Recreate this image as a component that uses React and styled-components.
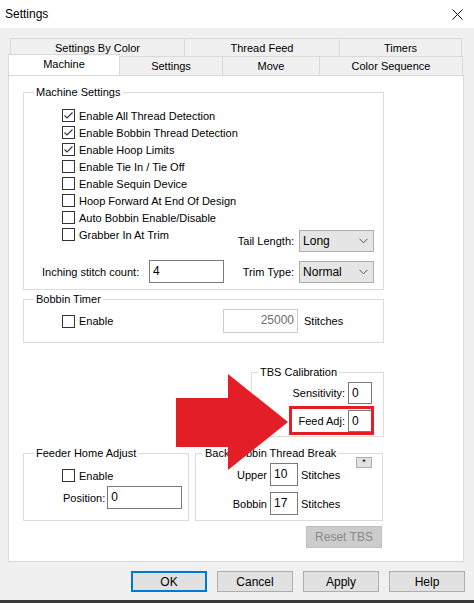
import React from "react";
import styled, { createGlobalStyle } from "styled-components";

const GlobalStyle = createGlobalStyle`
  html, body {
    margin: 0;
    padding: 0;
    background: #f0f0f0;
  }
  body {
    font-family: "Liberation Sans", Arial, sans-serif;
    font-size: 11px;
    color: #000;
  }
`;

const Window = styled.div`
  width: 474px;
  height: 603px;
  display: flex;
  flex-direction: column;
  background: #f0f0f0;
  overflow: hidden;
`;

const TitleBar = styled.div`
  flex: none;
  height: 28px;
  box-sizing: border-box;
  padding: 0 11px 0 5px;
  background: #fff;
  display: flex;
  align-items: center;
  justify-content: space-between;
  font-size: 12px;
`;

const Tabs = styled.div`
  margin-top: 10px;
  display: flex;
  flex-direction: column;
`;

const TabRow = styled.div`
  display: flex;
  margin-left: ${(p) => p.$indent}px;
  height: ${(p) => p.$height}px;
`;

const Tab = styled.div`
  box-sizing: border-box;
  width: ${(p) => p.$width}px;
  height: ${(p) => (p.$active ? p.$h + 2 : p.$h)}px;
  margin-top: ${(p) => (p.$active ? -2 : 0)}px;
  border: 1px solid #d9d9d9;
  border-bottom: none;
  margin-right: -1px;
  background: ${(p) => (p.$active ? "#fff" : "#f0f0f0")};
  display: flex;
  align-items: center;
  justify-content: center;
  padding-bottom: ${(p) => (p.$active ? 3 : 0)}px;
  position: relative;
  z-index: ${(p) => (p.$active ? 2 : 1)};
`;

const Panel = styled.div`
  position: relative;
  margin-left: 8px;
  width: 456px;
  height: 487px;
  box-sizing: border-box;
  background: #fff;
  border: 1px solid #d9d9d9;
  padding: 9px 0 0 14px;
`;

const Column = styled.div`
  width: 361px;
  display: flex;
  flex-direction: column;
`;

const Group = styled.fieldset`
  margin: 0;
  padding: 0;
  min-width: 0;
  border: 1px solid #dcdcdc;
  box-sizing: border-box;
  position: relative;
  width: ${(p) => (p.$width ? `${p.$width}px` : "auto")};
  margin-top: ${(p) => p.$top || 0}px;
  align-self: ${(p) => p.$align || "stretch"};
`;

const Legend = styled.legend`
  padding: 0 2px;
  margin-left: ${(p) => p.$indent}px;
  line-height: 14px;
  font-size: 11px;
`;

const GroupBody = styled.div`
  padding: ${(p) => p.$pad};
`;

const MachineBody = styled(GroupBody)`
  display: flex;
  justify-content: space-between;
`;

const LeftCol = styled.div`
  display: flex;
  flex-direction: column;
  flex: none;
`;

const CheckList = styled.div`
  margin-left: 20px;
  display: flex;
  flex-direction: column;
`;

const CheckRow = styled.label`
  height: 17px;
  display: flex;
  align-items: center;
  gap: 4px;
  white-space: nowrap;
  width: ${(p) => (p.$width ? `${p.$width}px` : "auto")};
  flex: none;
`;

const Box = styled.span`
  width: 13px;
  height: 13px;
  box-sizing: border-box;
  border: 1px solid #333;
  background: #fff;
  display: flex;
  flex: none;
`;

const FieldRow = styled.div`
  height: ${(p) => p.$h || 23}px;
  margin-top: ${(p) => p.$top || 0}px;
  display: flex;
  align-items: center;
  gap: ${(p) => p.$gap || 3}px;
  justify-content: ${(p) => (p.$end ? "flex-end" : "flex-start")};
`;

const Text = styled.span`
  width: ${(p) => (p.$width ? `${p.$width}px` : "auto")};
  margin-left: ${(p) => p.$left || 0}px;
  text-align: ${(p) => (p.$right ? "right" : "left")};
  white-space: nowrap;
  flex: none;
`;

const Input = styled.div`
  box-sizing: border-box;
  width: ${(p) => p.$width}px;
  height: ${(p) => p.$h || 23}px;
  border: 1px solid ${(p) => (p.$disabled ? "#cccccc" : "#7a7a7a")};
  background: #fff;
  color: ${(p) => (p.$disabled ? "#6d6d6d" : "#000")};
  display: flex;
  align-items: flex-start;
  justify-content: ${(p) => (p.$right ? "flex-end" : "flex-start")};
  padding: 3px 3px 0 3px;
  font-size: 12px;
  flex: none;
`;

const RightCol = styled.div`
  display: flex;
  flex-direction: column;
  justify-content: flex-end;
  gap: 8px;
`;

const Select = styled.div`
  box-sizing: border-box;
  width: 75px;
  height: 22px;
  border: 1px solid #adadad;
  background: #e5e5e5;
  display: flex;
  align-items: center;
  justify-content: space-between;
  padding: 0 5px 0 3px;
  font-size: 12px;
`;

const TimerRow = styled.div`
  height: 24px;
  display: flex;
  align-items: center;
  padding-left: 38px;
`;

const BottomRow = styled.div`
  margin-top: 9px;
  display: flex;
  gap: 6px;
`;

const BreakGrid = styled.div`
  display: grid;
  grid-template-columns: 71px 28px 1fr 16px;
  grid-auto-rows: 23px;
  column-gap: 3px;
  row-gap: 6px;
  align-items: center;
`;

const StarButton = styled.div`
  align-self: start;
  margin-top: -6px;
  width: 16px;
  height: 11px;
  box-sizing: border-box;
  border: 1px solid #adadad;
  background: #e1e1e1;
  font-size: 9px;
  line-height: 8px;
  text-align: center;
`;

const Button = styled.div`
  box-sizing: border-box;
  width: 76px;
  height: ${(p) => p.$h || 21}px;
  display: flex;
  align-items: center;
  justify-content: center;
  font-size: 12px;
  border: ${(p) => (p.$default ? "2px solid #0078d7" : "1px solid #adadad")};
  background: ${(p) => (p.$disabled ? "#cccccc" : "#e1e1e1")};
  color: ${(p) => (p.$disabled ? "#8a8a8a" : "#000")};
`;

const ResetButton = styled(Button)`
  align-self: flex-end;
  margin: 5px 2px 0 0;
  border-color: #bfbfbf;
`;

const ButtonBar = styled.div`
  margin-top: 9px;
  padding-right: 9px;
  display: flex;
  justify-content: flex-end;
  gap: 10px;
`;

const Taskbar = styled.div`
  margin-top: auto;
  height: 3px;
  background: #3a3a3a;
`;

// red annotation drawn over the dialog
const Highlight = styled.div`
  position: absolute;
  left: 37px;
  top: 27px;
  width: 85px;
  height: 29px;
  box-sizing: border-box;
  border: 3px solid #e41e26;
  z-index: 3;
`;

const Arrow = styled.svg`
  position: absolute;
  left: 167px;
  top: 298px;
  z-index: 4;
`;

function CheckBox({ label, checked, width }) {
    return (
        <CheckRow $width={width}>
            <Box>
                {checked && (
                    <svg width="11" height="11" viewBox="0 0 11 11">
                        <polyline points="1.5,5.5 4,8 9.5,2.5" fill="none" stroke="#333" strokeWidth="1.1" />
                    </svg>
                )}
            </Box>
            {label}
        </CheckRow>
    );
}

function Chevron() {
    return (
        <svg width="9" height="6" viewBox="0 0 9 6">
            <polyline points="0.5,0.8 4.5,4.8 8.5,0.8" fill="none" stroke="#555" strokeWidth="1" />
        </svg>
    );
}

const machineOptions = [
    ["Enable All Thread Detection", true],
    ["Enable Bobbin Thread Detection", true],
    ["Enable Hoop Limits", true],
    ["Enable Tie In / Tie Off", false],
    ["Enable Sequin Device", false],
    ["Hoop Forward At End Of Design", false],
    ["Auto Bobbin Enable/Disable", false],
    ["Grabber In At Trim", false],
];

const backTabs = [
    ["Settings By Color", 175],
    ["Thread Feed", 156],
    ["Timers", 123],
];

const frontTabs = [
    ["Machine", 112, true],
    ["Settings", 104],
    ["Move", 98],
    ["Color Sequence", 144],
];

export default function App() {
    return (
        <>
            <GlobalStyle />
            <Window>
                <TitleBar>
                    <span>Settings</span>
                    <svg width="11" height="11" viewBox="0 0 11 11">
                        <path d="M0.5 0.5 L10.5 10.5 M10.5 0.5 L0.5 10.5" stroke="#111" strokeWidth="1" />
                    </svg>
                </TitleBar>

                <Tabs>
                    <TabRow $indent={10} $height={18}>
                        {backTabs.map(([name, w]) => (
                            <Tab key={name} $width={w} $h={18}>
                                {name}
                            </Tab>
                        ))}
                    </TabRow>
                    <TabRow $indent={8} $height={19}>
                        {frontTabs.map(([name, w, active]) => (
                            <Tab key={name} $width={w} $h={19} $active={active}>
                                {name}
                            </Tab>
                        ))}
                    </TabRow>
                </Tabs>

                <Panel>
                    <Column>
                        <Group>
                            <Legend $indent={10}>Machine Settings</Legend>
                            <MachineBody $pad="8px 10px 6px 18px">
                                <LeftCol>
                                    <CheckList>
                                        {machineOptions.map(([label, checked]) => (
                                            <CheckBox key={label} label={label} checked={checked} />
                                        ))}
                                    </CheckList>
                                    <FieldRow $top={17}>
                                        <Text $width={104}>Inching stitch count:</Text>
                                        <Input $width={75}>4</Input>
                                    </FieldRow>
                                </LeftCol>
                                <RightCol>
                                    <FieldRow $gap={5} $end>
                                        <Text>Tail Length:</Text>
                                        <Select>
                                            Long
                                            <Chevron />
                                        </Select>
                                    </FieldRow>
                                    <FieldRow $gap={5} $end>
                                        <Text>Trim Type:</Text>
                                        <Select>
                                            Normal
                                            <Chevron />
                                        </Select>
                                    </FieldRow>
                                </RightCol>
                            </MachineBody>
                        </Group>

                        <Group $top={2}>
                            <Legend $indent={10}>Bobbin Timer</Legend>
                            <GroupBody $pad="3px 0 9px 0">
                                <TimerRow>
                                    <CheckBox label="Enable" width={161} />
                                    <Input $width={75} $h={24} $right $disabled>
                                        25000
                                    </Input>
                                    <Text $left={6}>Stitches</Text>
                                </TimerRow>
                            </GroupBody>
                        </Group>

                        <Group $top={22} $width={133} $align="flex-end">
                            <Legend $indent={6}>TBS Calibration</Legend>
                            <GroupBody $pad="3px 11px 4px 0">
                                <FieldRow $h={22} $end>
                                    <Text>Sensitivity:</Text>
                                    <Input $width={24} $h={22}>0</Input>
                                </FieldRow>
                                <FieldRow $h={22} $top={6} $end>
                                    <Text>Feed Adj:</Text>
                                    <Input $width={24} $h={22}>0</Input>
                                </FieldRow>
                            </GroupBody>
                            <Highlight />
                        </Group>

                        <BottomRow>
                            <Group $width={166}>
                                <Legend $indent={10}>Feeder Home Adjust</Legend>
                                <GroupBody $pad="7px 0 10px 38px">
                                    <CheckBox label="Enable" />
                                    <FieldRow $top={2} $gap={2}>
                                        <Text $left={1}>Position:</Text>
                                        <Input $width={75}>0</Input>
                                    </FieldRow>
                                </GroupBody>
                            </Group>
                            <Group $width={188}>
                                <Legend $indent={7}>Back Bobbin Thread Break</Legend>
                                <GroupBody $pad="3px 10px 5px 0">
                                    <BreakGrid>
                                        <Text $right>Upper</Text>
                                        <Input $width={28}>10</Input>
                                        <Text>Stitches</Text>
                                        <StarButton>*</StarButton>
                                        <Text $right>Bobbin</Text>
                                        <Input $width={28}>17</Input>
                                        <Text>Stitches</Text>
                                    </BreakGrid>
                                </GroupBody>
                            </Group>
                        </BottomRow>

                        <ResetButton $disabled $h={22}>
                            Reset TBS
                        </ResetButton>
                    </Column>

                    <Arrow width="112" height="96" viewBox="0 0 112 96">
                        <polygon points="0,24 52,24 52,0 112,48 52,96 52,73 0,73" fill="#e41e26" />
                    </Arrow>
                </Panel>

                <ButtonBar>
                    <Button $default>OK</Button>
                    <Button>Cancel</Button>
                    <Button>Apply</Button>
                    <Button>Help</Button>
                </ButtonBar>

                <Taskbar />
            </Window>
        </>
    );
}
